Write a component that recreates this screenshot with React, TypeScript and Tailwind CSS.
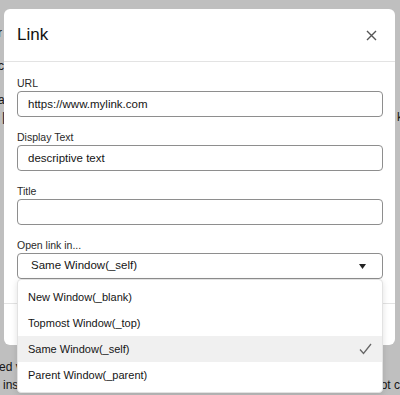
import { useState } from "react";

const options = [
  { value: "_blank", label: "New Window(_blank)" },
  { value: "_top", label: "Topmost Window(_top)" },
  { value: "_self", label: "Same Window(_self)" },
  { value: "_parent", label: "Parent Window(_parent)" },
];

function Field({ label, value, onChange }: { label: string; value: string; onChange: (v: string) => void }) {
  return (
    <div className="mb-[12px] flex flex-col">
      <label className="text-[10.5px] leading-[16px] text-[#2a2a2a]">{label}</label>
      <input
        className="h-[26px] w-full rounded-[4px] border border-[#8e8e8e] bg-white px-[10px] text-[11.5px] text-[#151515] outline-none"
        value={value}
        onChange={(e) => onChange(e.target.value)}
      />
    </div>
  );
}

export default function App() {
  const [url, setUrl] = useState("https://www.mylink.com");
  const [text, setText] = useState("descriptive text");
  const [title, setTitle] = useState("");
  const [target, setTarget] = useState("_self");

  const current = options.find((o) => o.value === target);

  return (
    <div
      className="relative h-[395px] w-[400px] overflow-hidden bg-white text-[#222]"
      style={{ fontFamily: '"Liberation Sans", Arial, sans-serif' }}
    >
      {/* page behind the dialog, mostly covered */}
      <div className="flex flex-col whitespace-nowrap text-[12px] leading-[16px] text-[#222]">
        <p className="mt-[25px] -ml-[2px]">r</p>
        <p className="mt-[17px] -ml-[2px]">c</p>
        <p className="mt-[18px] -ml-[2px]">a</p>
        <p className="mt-[1px] flex justify-between pl-[2px] -mr-[3px]">
          <span>|</span>
          <span>k</span>
        </p>
        <p className="mt-[234px] -ml-[1px]">ed v</p>
        <p className="mt-[2px] flex justify-between pl-[3px]">
          <span>ins</span>
          <span>ot c</span>
        </p>
      </div>
      <div className="absolute inset-0 bg-black/25" />

      {/* dialog */}
      <div className="absolute left-[4px] top-[9px] flex h-[336px] w-[391px] flex-col rounded-[6px] bg-white">
        <div className="flex h-[53px] shrink-0 items-center justify-between border-b border-[#e3e3e3] pl-[13px] pr-[18px]">
          <h2 className="text-[17px] text-[#111]">Link</h2>
          <button className="text-[#555]">
            <svg width="11" height="11" viewBox="0 0 11 11" fill="none" stroke="currentColor" strokeWidth="1.4">
              <path d="M1 1 L10 10 M10 1 L1 10" />
            </svg>
          </button>
        </div>

        <div className="flex-1 pl-[13px] pr-[12px] pt-[13px]">
          <Field label="URL" value={url} onChange={setUrl} />
          <Field label="Display Text" value={text} onChange={setText} />
          <Field label="Title" value={title} onChange={setTitle} />

          <div className="flex flex-col">
            <label className="text-[10.5px] leading-[16px] text-[#2a2a2a]">Open link in...</label>
            <div className="relative">
              <button className="flex h-[26px] w-full items-center justify-between rounded-[4px] border border-[#8e8e8e] bg-white pl-[13px] pr-[16px] text-[11.5px] text-[#151515]">
                <span>{current?.label}</span>
                <svg width="7" height="5" viewBox="0 0 7 5" fill="#222">
                  <path d="M0 0 H7 L3.5 5 Z" />
                </svg>
              </button>

              {/* open listbox */}
              <ul className="absolute left-0 top-full z-10 w-full rounded-[4px] border border-[#e2e2e2] bg-white py-[4px] shadow-[0_2px_6px_rgba(0,0,0,0.12)]">
                {options.map((o) => (
                  <li
                    key={o.value}
                    onClick={() => setTarget(o.value)}
                    className={`flex h-[26px] cursor-pointer items-center justify-between pl-[10px] pr-[10px] text-[11px] text-[#151515] ${
                      o.value === target ? "bg-[#f0f0f0]" : ""
                    }`}
                  >
                    <span>{o.label}</span>
                    {o.value === target && (
                      <svg width="13" height="12" viewBox="0 0 13 12" fill="none" stroke="#666" strokeWidth="1.3">
                        <path d="M1 6.5 L4.5 10.5 L12 1" />
                      </svg>
                    )}
                  </li>
                ))}
              </ul>
            </div>
          </div>
        </div>

        <div className="flex h-[42px] shrink-0 items-center justify-end gap-2 border-t border-[#e3e3e3] pr-[12px]">
          <button className="rounded-[4px] border border-[#ccc] px-3 py-1 text-[12px]">Cancel</button>
          <button className="rounded-[4px] bg-[#207ab7] px-3 py-1 text-[12px] text-white">Save</button>
        </div>
      </div>
    </div>
  );
}
